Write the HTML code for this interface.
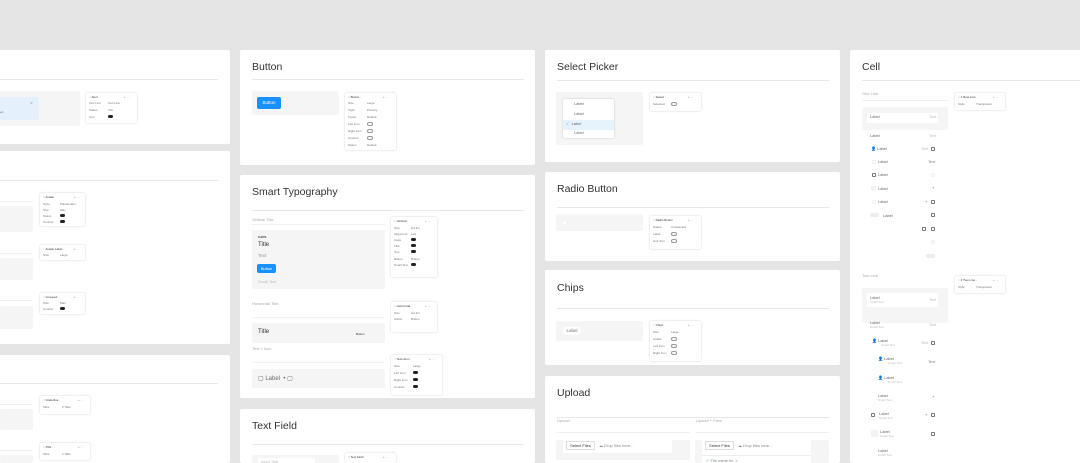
<!DOCTYPE html>
<html style="width:1080px;height:463px;overflow:hidden"><head><meta charset="utf-8"><style>
*{margin:0;padding:0;box-sizing:border-box}
html,body{width:1080px;height:463px;overflow:hidden}
body{background:#e5e5e5;position:relative;font-family:"Liberation Sans",sans-serif;color:#333}
.a{position:absolute}
.card{position:absolute;background:#fff;border-radius:2px}
.t{position:absolute;font-size:10.5px;color:#333;white-space:nowrap}
.div{position:absolute;height:1px;background:#e8e8e8}
.g{position:absolute;background:#f5f5f5;border-radius:2px}
.p{position:absolute;background:#fff;border-radius:2px;box-shadow:0 0 2px rgba(0,0,0,.18)}
.s{position:absolute;font-size:3px;color:#777;white-space:nowrap}
.lb{position:absolute;font-size:4px;color:#aaa;white-space:nowrap}
.tg{position:absolute;width:5px;height:3px;border-radius:2px;background:#222}
.tgo{position:absolute;width:6px;height:4px;border-radius:2px;border:.6px solid #999}
.sm{position:absolute;font-size:4.5px;color:#666;white-space:nowrap}
.bx{position:absolute;width:4px;height:4px;border:.7px solid #777;border-radius:1px}
.btn{position:absolute;background:#1890ff;border-radius:2px;color:#fff;font-size:4.5px;text-align:center}
</style></head><body>

<!-- Column 1 -->
<div class="card" style="left:-4px;top:50px;width:234px;height:94px"></div>
<div class="div" style="left:0;top:79px;width:218px"></div>
<div class="g" style="left:0;top:91px;width:80px;height:35px"></div>
<div class="a" style="left:0;top:97px;width:39px;height:23px;background:#e4f1fc;border-radius:2px"></div>
<div class="s" style="left:30px;top:101px;font-size:5px;color:#999">×</div>
<div class="s" style="left:0;top:110px">ed</div>
<div class="p" style="left:86px;top:93px;width:51px;height:30px"></div>
<div class="s" style="left:89px;top:95px;color:#333">◌ Alert ·</div><div class="s" style="left:124px;top:95px">+ ···</div>
<div class="s" style="left:89px;top:101px">Text Line</div><div class="s" style="left:108px;top:101px">Text Line</div>
<div class="s" style="left:89px;top:108px">Status</div><div class="s" style="left:108px;top:108px">Info</div>
<div class="s" style="left:89px;top:115px">Icon</div><div class="tg" style="left:108px;top:115px"></div>

<div class="card" style="left:-4px;top:151px;width:234px;height:193px"></div>
<div class="div" style="left:0;top:180px;width:218px"></div>
<div class="div" style="left:0;top:201px;width:33px;background:#f0f0f0"></div>
<div class="g" style="left:0;top:206px;width:33px;height:26px"></div>
<div class="div" style="left:0;top:253px;width:33px;background:#f0f0f0"></div>
<div class="g" style="left:0;top:258px;width:33px;height:22px"></div>
<div class="div" style="left:0;top:300px;width:33px;background:#f0f0f0"></div>
<div class="g" style="left:0;top:306px;width:33px;height:23px"></div>
<div class="p" style="left:40px;top:193px;width:45px;height:33px"></div>
<div class="s" style="left:43px;top:195px;color:#333">◌ Avatar ·</div><div class="s" style="left:74px;top:195px">+ ···</div>
<div class="s" style="left:43px;top:202px">Style</div><div class="s" style="left:60px;top:202px">Placeholder</div>
<div class="s" style="left:43px;top:208px">Size</div><div class="s" style="left:60px;top:208px">Max</div>
<div class="s" style="left:43px;top:214px">Status</div><div class="tg" style="left:60px;top:214px"></div>
<div class="s" style="left:43px;top:220px">Counter</div><div class="tg" style="left:60px;top:220px"></div>
<div class="p" style="left:40px;top:245px;width:45px;height:15px"></div>
<div class="s" style="left:43px;top:247px;color:#333">◌ Avatar Label ·</div><div class="s" style="left:74px;top:247px">+ ···</div>
<div class="s" style="left:43px;top:253px">Size</div><div class="s" style="left:60px;top:253px">Large</div>
<div class="p" style="left:40px;top:293px;width:45px;height:21px"></div>
<div class="s" style="left:43px;top:295px;color:#333">◌ Grouped ·</div><div class="s" style="left:74px;top:295px">+ ···</div>
<div class="s" style="left:43px;top:301px">Size</div><div class="s" style="left:60px;top:301px">Max</div>
<div class="s" style="left:43px;top:307px">Counter</div><div class="tg" style="left:60px;top:307px"></div>

<div class="card" style="left:-4px;top:355px;width:234px;height:108px"></div>
<div class="div" style="left:0;top:383px;width:218px"></div>
<div class="div" style="left:0;top:404px;width:33px;background:#f0f0f0"></div>
<div class="g" style="left:0;top:409px;width:33px;height:21px"></div>
<div class="div" style="left:0;top:450px;width:33px;background:#f0f0f0"></div>
<div class="g" style="left:0;top:455px;width:33px;height:8px"></div>
<div class="p" style="left:40px;top:396px;width:50px;height:18px"></div>
<div class="s" style="left:43px;top:398px;color:#333">◌ Underline ·</div><div class="s" style="left:78px;top:398px">+ ···</div>
<div class="s" style="left:43px;top:405px">Tabs</div><div class="s" style="left:62px;top:405px">2 Tabs</div>
<div class="p" style="left:40px;top:443px;width:50px;height:17px"></div>
<div class="s" style="left:43px;top:445px;color:#333">◌ Pills ·</div><div class="s" style="left:78px;top:445px">+ ···</div>
<div class="s" style="left:43px;top:452px">Tabs</div><div class="s" style="left:62px;top:452px">2 Tabs</div>

<!-- Column 2 -->
<div class="card" style="left:240px;top:50px;width:295px;height:115px"></div>
<div class="t" style="left:252px;top:61px">Button</div>
<div class="div" style="left:252px;top:79px;width:272px"></div>
<div class="g" style="left:252px;top:91px;width:87px;height:24px"></div>
<div class="btn" style="left:257px;top:97px;width:24px;height:12px;line-height:12px">Button</div>
<div class="p" style="left:345px;top:93px;width:51px;height:57px"></div>
<div class="s" style="left:348px;top:95px;color:#333">◌ Button ·</div><div class="s" style="left:383px;top:95px">+ ···</div>
<div class="s" style="left:348px;top:101px">Size</div><div class="s" style="left:367px;top:101px">Large</div>
<div class="s" style="left:348px;top:108px">Style</div><div class="s" style="left:367px;top:108px">Primary</div>
<div class="s" style="left:348px;top:115px">Types</div><div class="s" style="left:367px;top:115px">Default</div>
<div class="s" style="left:348px;top:122px">Left Icon</div><div class="tgo" style="left:367px;top:122px"></div>
<div class="s" style="left:348px;top:129px">Right Icon</div><div class="tgo" style="left:367px;top:129px"></div>
<div class="s" style="left:348px;top:136px">Counter</div><div class="tgo" style="left:367px;top:136px"></div>
<div class="s" style="left:348px;top:143px">States</div><div class="s" style="left:367px;top:143px">Default</div>

<div class="card" style="left:240px;top:175px;width:295px;height:223px"></div>
<div class="t" style="left:252px;top:186px">Smart Typography</div>
<div class="div" style="left:252px;top:210px;width:272px"></div>
<div class="lb" style="left:252px;top:217px">Vertical Title</div>
<div class="div" style="left:252px;top:224px;width:133px;background:#f0f0f0"></div>
<div class="g" style="left:252px;top:230px;width:133px;height:59px"></div>
<div class="s" style="left:258px;top:235px;color:#333;font-weight:bold">CAPS</div>
<div class="a" style="left:258px;top:242px;font-size:6px;color:#333">Title</div>
<div class="sm" style="left:258px;top:253px;color:#999">Text</div>
<div class="btn" style="left:257px;top:264px;width:19px;height:9px;line-height:9px;font-size:4px">Button</div>
<div class="sm" style="left:258px;top:279px;color:#bbb;font-size:4px">Small Text</div>
<div class="p" style="left:391px;top:217px;width:46px;height:60px"></div>
<div class="s" style="left:394px;top:219px;color:#333">◌ Vertical ·</div><div class="s" style="left:425px;top:219px">+ ···</div>
<div class="s" style="left:394px;top:226px">Size</div><div class="s" style="left:411px;top:226px">Hd 4m</div>
<div class="s" style="left:394px;top:232px">Alignment</div><div class="s" style="left:411px;top:232px">Left</div>
<div class="s" style="left:394px;top:238px">Caps</div><div class="tg" style="left:411px;top:238px"></div>
<div class="s" style="left:394px;top:244px">Title</div><div class="tg" style="left:411px;top:244px"></div>
<div class="s" style="left:394px;top:250px">Text</div><div class="tg" style="left:411px;top:250px"></div>
<div class="s" style="left:394px;top:257px">Button</div><div class="s" style="left:411px;top:257px">Button</div>
<div class="s" style="left:394px;top:263px">Small Text</div><div class="tg" style="left:411px;top:263px"></div>

<div class="lb" style="left:252px;top:301px">Horizontal Title</div>
<div class="div" style="left:252px;top:317px;width:133px;background:#f0f0f0"></div>
<div class="g" style="left:252px;top:323px;width:133px;height:20px"></div>
<div class="a" style="left:258px;top:329px;font-size:6px;color:#333">Title</div>
<div class="s" style="left:356px;top:332px;color:#333">Button</div>
<div class="p" style="left:391px;top:302px;width:46px;height:30px"></div>
<div class="s" style="left:394px;top:304px;color:#333">◌ Horizontal ·</div><div class="s" style="left:425px;top:304px">+ ···</div>
<div class="s" style="left:394px;top:311px">Size</div><div class="s" style="left:411px;top:311px">Hd 4m</div>
<div class="s" style="left:394px;top:317px">Action</div><div class="s" style="left:411px;top:317px">Button</div>

<div class="lb" style="left:252px;top:346px">Text + Icon</div>
<div class="div" style="left:252px;top:362px;width:133px;background:#f0f0f0"></div>
<div class="g" style="left:252px;top:369px;width:133px;height:19px"></div>
<div class="sm" style="left:258px;font-size:6px;line-height:6px;top:376px">▢ Label &nbsp;• ▢</div>
<div class="p" style="left:391px;top:355px;width:51px;height:40px"></div>
<div class="s" style="left:394px;top:357px;color:#333">◌ Text+Icon ·</div><div class="s" style="left:429px;top:357px">+ ···</div>
<div class="s" style="left:394px;top:364px">Size</div><div class="s" style="left:413px;top:364px">Large</div>
<div class="s" style="left:394px;top:371px">Left Icon</div><div class="tg" style="left:413px;top:371px"></div>
<div class="s" style="left:394px;top:378px">Right Icon</div><div class="tg" style="left:413px;top:378px"></div>
<div class="s" style="left:394px;top:385px">Counter</div><div class="tg" style="left:413px;top:385px"></div>

<div class="card" style="left:240px;top:409px;width:295px;height:54px"></div>
<div class="t" style="left:252px;top:420px">Text Field</div>
<div class="div" style="left:252px;top:444px;width:272px"></div>
<div class="g" style="left:252px;top:455px;width:87px;height:8px"></div>
<div class="a" style="left:258px;top:458px;width:57px;height:5px;background:#fff;border-radius:1px"></div>
<div class="s" style="left:261px;top:459px;color:#bbb;font-size:4px">Input Text</div>
<div class="p" style="left:345px;top:453px;width:51px;height:10px"></div>
<div class="s" style="left:348px;top:455px;color:#333">◌ Text Field ·</div><div class="s" style="left:383px;top:455px">+ ···</div>

<!-- Column 3 -->
<div class="card" style="left:545px;top:50px;width:295px;height:112px"></div>
<div class="t" style="left:557px;top:61px">Select Picker</div>
<div class="div" style="left:557px;top:80px;width:272px"></div>
<div class="g" style="left:556px;top:92px;width:87px;height:53px"></div>
<div class="p" style="left:563px;top:99px;width:51px;height:39px"></div>
<div class="a" style="left:563px;top:120px;width:51px;height:10px;background:#e6f3fd"></div>
<div class="sm" style="left:574px;top:101px;font-size:4px">Label</div>
<div class="sm" style="left:574px;top:111px;font-size:4px">Label</div>
<div class="sm" style="left:566px;top:121px;font-size:4px"><span style="color:#1890ff">✓</span>&nbsp; Label</div>
<div class="sm" style="left:574px;top:130px;font-size:4px">Label</div>
<div class="p" style="left:650px;top:93px;width:51px;height:18px"></div>
<div class="s" style="left:653px;top:95px;color:#333">◌ Select ·</div><div class="s" style="left:688px;top:95px">+ ···</div>
<div class="s" style="left:653px;top:102px">Selected</div><div class="tgo" style="left:671px;top:102px"></div>

<div class="card" style="left:545px;top:172px;width:295px;height:89px"></div>
<div class="t" style="left:557px;top:183px">Radio Button</div>
<div class="div" style="left:557px;top:207px;width:272px"></div>
<div class="g" style="left:556px;top:214px;width:87px;height:17px"></div>
<div class="a" style="left:563px;top:221px;width:3px;height:3px;border-radius:50%;background:#fff"></div>
<div class="p" style="left:650px;top:216px;width:51px;height:33px"></div>
<div class="s" style="left:653px;top:218px;color:#333">◌ Radio Button ·</div><div class="s" style="left:688px;top:218px">+ ···</div>
<div class="s" style="left:653px;top:225px">States</div><div class="s" style="left:671px;top:225px">Unselected</div>
<div class="s" style="left:653px;top:232px">Label</div><div class="tgo" style="left:671px;top:232px"></div>
<div class="s" style="left:653px;top:239px">Hint Text</div><div class="tgo" style="left:671px;top:239px"></div>

<div class="card" style="left:545px;top:270px;width:295px;height:95px"></div>
<div class="t" style="left:557px;top:282px">Chips</div>
<div class="div" style="left:557px;top:308px;width:272px"></div>
<div class="g" style="left:556px;top:321px;width:87px;height:20px"></div>
<div class="a" style="left:563px;top:327px;width:18px;height:8px;background:#fff;border-radius:4px;font-size:4.5px;color:#777;text-align:center;line-height:8px">Label</div>
<div class="p" style="left:650px;top:321px;width:51px;height:40px"></div>
<div class="s" style="left:653px;top:323px;color:#333">◌ Chips ·</div><div class="s" style="left:688px;top:323px">+ ···</div>
<div class="s" style="left:653px;top:330px">Size</div><div class="s" style="left:671px;top:330px">Large</div>
<div class="s" style="left:653px;top:337px">Avatar</div><div class="tgo" style="left:671px;top:337px"></div>
<div class="s" style="left:653px;top:344px">Left Icon</div><div class="tgo" style="left:671px;top:344px"></div>
<div class="s" style="left:653px;top:351px">Right Icon</div><div class="tgo" style="left:671px;top:351px"></div>

<div class="card" style="left:545px;top:376px;width:295px;height:87px"></div>
<div class="t" style="left:557px;top:387px">Upload</div>
<div class="div" style="left:557px;top:417px;width:272px"></div>
<div class="lb" style="left:557px;top:418px">Upload</div>
<div class="lb" style="left:696px;top:418px">Upload + Files</div>
<div class="div" style="left:557px;top:432px;width:133px;background:#f0f0f0"></div>
<div class="div" style="left:696px;top:432px;width:133px;background:#f0f0f0"></div>
<div class="g" style="left:556px;top:440px;width:134px;height:20px"></div>
<div class="a" style="left:563px;top:437px;width:109px;height:16px;background:#fff"></div>
<div class="a" style="left:566px;top:441px;width:29px;height:9px;border:.6px solid #ddd;border-radius:1px;font-size:4px;color:#333;text-align:center;line-height:8px">Select Files</div>
<div class="sm" style="left:599px;font-size:4px;color:#888;top:443px">☁ Drop files here...</div>
<div class="g" style="left:695px;top:440px;width:134px;height:23px"></div>
<div class="a" style="left:702px;top:437px;width:109px;height:26px;background:#fff"></div>
<div class="a" style="left:705px;top:441px;width:29px;height:9px;border:.6px solid #ddd;border-radius:1px;font-size:4px;color:#333;text-align:center;line-height:8px">Select Files</div>
<div class="sm" style="left:738px;top:443px;font-size:4px;color:#888">☁ Drop files here...</div>
<div class="div" style="left:702px;top:455px;width:109px;background:#eee"></div>
<div class="sm" style="left:706px;top:458px;font-size:4px;color:#888"><span style="color:#1890ff">✓</span> File name.fix &nbsp;×</div>

<!-- Column 4 -->
<div class="card" style="left:850px;top:50px;width:240px;height:413px"></div>
<div class="t" style="left:862px;top:61px">Cell</div>
<div class="div" style="left:862px;top:80px;width:230px"></div>
<div class="lb" style="left:862px;top:91px">One Line</div>
<div class="div" style="left:862px;top:100px;width:86px;background:#f0f0f0"></div>
<div class="g" style="left:862px;top:107px;width:86px;height:23px"></div>
<div class="a" style="left:867px;top:113px;width:71px;height:10px;background:#fff"></div>
<div class="sm" style="left:870px;top:114px;font-size:4px">Label</div><div class="sm" style="left:929px;top:114px;font-size:4px;color:#bbb">Text</div>
<div class="sm" style="left:870px;top:133px;font-size:4px">Label</div><div class="sm" style="left:929px;top:133px;font-size:4px;color:#bbb">Text</div>
<div class="sm" style="left:871px;top:146px;font-size:4px">👤 Label</div><div class="sm" style="left:921px;top:146px;font-size:4px;color:#bbb">Text</div><div class="bx" style="left:931px;top:147px"></div>
<div class="bx" style="left:872px;top:160px;border-color:#eee"></div><div class="sm" style="left:878px;top:159px;font-size:4px">Label</div><div class="sm" style="left:928px;top:159px;font-size:4px;color:#888">Text</div>
<div class="bx" style="left:872px;top:173px"></div><div class="sm" style="left:878px;top:172px;font-size:4px">Label</div><div class="bx" style="left:931px;top:173px;border-color:#eee;border-radius:50%"></div>
<div class="a" style="left:871px;top:186px;width:5px;height:5px;background:#f2f2f2"></div><div class="sm" style="left:878px;top:186px;font-size:4px">Label</div><div class="sm" style="left:932px;top:185px;font-size:4px">+</div>
<div class="bx" style="left:872px;top:200px;border-color:#eee;border-radius:50%"></div><div class="sm" style="left:878px;top:199px;font-size:4px">Label</div><div class="sm" style="left:925px;top:199px;font-size:4px">+</div><div class="bx" style="left:931px;top:200px"></div>
<div class="a" style="left:870px;top:213px;width:9px;height:4px;border-radius:2px;background:#eee"></div><div class="sm" style="left:883px;top:213px;font-size:4px">Label</div><div class="bx" style="left:931px;top:213px"></div>
<div class="bx" style="left:922px;top:227px"></div><div class="bx" style="left:931px;top:227px"></div>
<div class="bx" style="left:931px;top:240px;border-color:#eee;border-radius:50%"></div>
<div class="a" style="left:926px;top:254px;width:9px;height:4px;border-radius:2px;background:#eee"></div>
<div class="p" style="left:955px;top:93px;width:50px;height:17px"></div>
<div class="s" style="left:958px;top:95px;color:#333">◌ 1 Row Line ·</div><div class="s" style="left:993px;top:95px">+ ···</div>
<div class="s" style="left:958px;top:102px">Style</div><div class="s" style="left:976px;top:102px">Transparent</div>

<div class="lb" style="left:862px;top:273px">Two Line</div>
<div class="div" style="left:862px;top:288px;width:86px;background:#f0f0f0"></div>
<div class="g" style="left:862px;top:288px;width:86px;height:35px"></div>
<div class="a" style="left:867px;top:293px;width:71px;height:14px;background:#fff"></div>
<div class="sm" style="left:870px;top:295px;font-size:4px">Label</div><div class="sm" style="left:870px;top:300px;font-size:3px;color:#bbb">Small Text</div><div class="sm" style="left:929px;top:297px;font-size:4px;color:#bbb">Text</div>
<div class="sm" style="left:870px;top:320px;font-size:4px">Label</div><div class="sm" style="left:870px;top:325px;font-size:3px;color:#bbb">Small Text</div><div class="sm" style="left:929px;top:322px;font-size:4px;color:#bbb">Text</div>
<div class="sm" style="left:872px;top:338px;font-size:4px">👤 Label</div><div class="sm" style="left:881px;top:343px;font-size:3px;color:#bbb">Small Text</div><div class="sm" style="left:921px;top:340px;font-size:4px;color:#bbb">Text</div><div class="bx" style="left:931px;top:341px"></div>
<div class="sm" style="left:878px;top:356px;font-size:4px">👤 Label</div><div class="sm" style="left:888px;top:361px;font-size:3px;color:#bbb">Small Text</div><div class="sm" style="left:928px;top:359px;font-size:4px;color:#888">Text</div>
<div class="sm" style="left:878px;top:375px;font-size:4px">👤 Label</div><div class="sm" style="left:888px;top:380px;font-size:3px;color:#bbb">Small Text</div>
<div class="sm" style="left:878px;top:393px;font-size:4px">Label</div><div class="sm" style="left:878px;top:398px;font-size:3px;color:#bbb">Small Text</div><div class="sm" style="left:932px;top:394px;font-size:4px">+</div>
<div class="bx" style="left:871px;top:413px"></div><div class="sm" style="left:879px;top:411px;font-size:4px">Label</div><div class="sm" style="left:879px;top:416px;font-size:3px;color:#bbb">Small Text</div><div class="sm" style="left:925px;top:412px;font-size:4px">+</div><div class="bx" style="left:931px;top:413px"></div>
<div class="a" style="left:871px;top:430px;width:7px;height:7px;background:#f2f2f2"></div><div class="sm" style="left:880px;top:429px;font-size:4px">Label</div><div class="sm" style="left:880px;top:434px;font-size:3px;color:#bbb">Small Text</div><div class="bx" style="left:931px;top:432px"></div>
<div class="sm" style="left:878px;top:448px;font-size:4px">Label</div><div class="sm" style="left:878px;top:453px;font-size:3px;color:#bbb">Small Text</div>
<div class="p" style="left:955px;top:276px;width:50px;height:17px"></div>
<div class="s" style="left:958px;top:278px;color:#333">◌ 2 Two Line ·</div><div class="s" style="left:993px;top:278px">+ ···</div>
<div class="s" style="left:958px;top:285px">Style</div><div class="s" style="left:976px;top:285px">Transparent</div>
</body></html>
